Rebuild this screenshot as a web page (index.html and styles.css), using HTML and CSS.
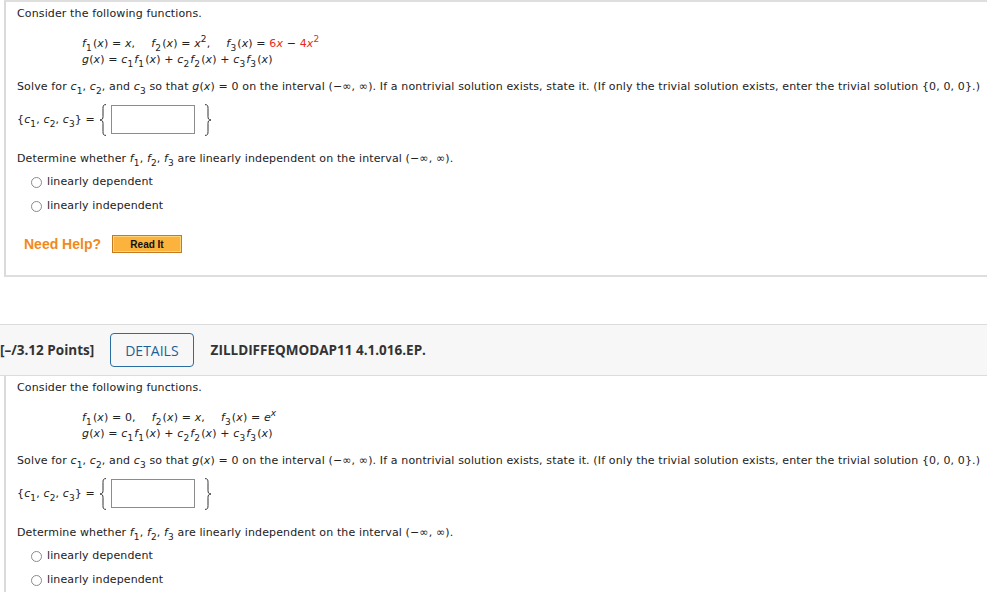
FILE: index.html
```html
<!DOCTYPE html>
<html lang="en">
<head>
<meta charset="utf-8">
<title>Linear independence</title>
<link rel="stylesheet" href="styles.css">
</head>
<body>
<section class="card first">
  <p class="intro">Consider the following functions.</p>
  <div class="math">
    <div class="mline"><i>f</i><sub>1</sub>(<i>x</i>) = <i>x</i>,<span class="sp"></span><i>f</i><sub>2</sub>(<i>x</i>) = <i>x</i><sup>2</sup>,<span class="sp"></span><i>f</i><sub>3</sub>(<i>x</i>) = <span class="red">6<i>x</i></span> − <span class="red">4<i>x</i><sup>2</sup></span></div>
    <div class="mline"><i>g</i>(<i>x</i>) = <i>c</i><sub>1</sub><i>f</i><sub>1</sub>(<i>x</i>) + <i>c</i><sub>2</sub><i>f</i><sub>2</sub>(<i>x</i>) + <i>c</i><sub>3</sub><i>f</i><sub>3</sub>(<i>x</i>)</div>
  </div>
  <p class="solve">Solve for <i>c</i><sub>1</sub>, <i>c</i><sub>2</sub>, and <i>c</i><sub>3</sub> so that <i>g</i>(<i>x</i>) = 0 on the interval (−∞, ∞). If a nontrivial solution exists, state it. (If only the trivial solution exists, enter the trivial solution {0, 0, 0}.)</p>
  <div class="setrow">
    <span class="setlabel">{<i>c</i><sub>1</sub>, <i>c</i><sub>2</sub>, <i>c</i><sub>3</sub>} =</span>
    <svg class="brace" viewBox="0 0 8 32" width="8" height="32"><path d="M7 0.6 C4.2 0.6 4 2 4 4.5 L4 12.5 C4 15 3.2 15.8 1 16 C3.2 16.2 4 17 4 19.5 L4 27.5 C4 30 4.2 31.4 7 31.4"/></svg>
    <span class="box"></span>
    <svg class="brace right" viewBox="0 0 8 32" width="8" height="32"><path d="M1 0.6 C3.8 0.6 4 2 4 4.5 L4 12.5 C4 15 4.8 15.8 7 16 C4.8 16.2 4 17 4 19.5 L4 27.5 C4 30 3.8 31.4 1 31.4"/></svg>
  </div>
  <p class="det">Determine whether <i>f</i><sub>1</sub>, <i>f</i><sub>2</sub>, <i>f</i><sub>3</sub> are linearly independent on the interval (−∞, ∞).</p>
  <ul class="choices">
    <li><span class="radio"></span>linearly dependent</li>
    <li><span class="radio"></span>linearly independent</li>
  </ul>
  <div class="help">
    <span class="needhelp">Need Help?</span>
    <span class="readit">Read It</span>
  </div>
</section>

<div class="qhead">
  <span class="points">[–/3.12 Points]</span>
  <span class="details">DETAILS</span>
  <span class="qid">ZILLDIFFEQMODAP11 4.1.016.EP.</span>
</div>

<section class="card second">
  <p class="intro">Consider the following functions.</p>
  <div class="math">
    <div class="mline"><i>f</i><sub>1</sub>(<i>x</i>) = 0,<span class="sp"></span><i>f</i><sub>2</sub>(<i>x</i>) = <i>x</i>,<span class="sp"></span><i>f</i><sub>3</sub>(<i>x</i>) = <i>e</i><sup><i>x</i></sup></div>
    <div class="mline"><i>g</i>(<i>x</i>) = <i>c</i><sub>1</sub><i>f</i><sub>1</sub>(<i>x</i>) + <i>c</i><sub>2</sub><i>f</i><sub>2</sub>(<i>x</i>) + <i>c</i><sub>3</sub><i>f</i><sub>3</sub>(<i>x</i>)</div>
  </div>
  <p class="solve">Solve for <i>c</i><sub>1</sub>, <i>c</i><sub>2</sub>, and <i>c</i><sub>3</sub> so that <i>g</i>(<i>x</i>) = 0 on the interval (−∞, ∞). If a nontrivial solution exists, state it. (If only the trivial solution exists, enter the trivial solution {0, 0, 0}.)</p>
  <div class="setrow">
    <span class="setlabel">{<i>c</i><sub>1</sub>, <i>c</i><sub>2</sub>, <i>c</i><sub>3</sub>} =</span>
    <svg class="brace" viewBox="0 0 8 32" width="8" height="32"><path d="M7 0.6 C4.2 0.6 4 2 4 4.5 L4 12.5 C4 15 3.2 15.8 1 16 C3.2 16.2 4 17 4 19.5 L4 27.5 C4 30 4.2 31.4 7 31.4"/></svg>
    <span class="box"></span>
    <svg class="brace right" viewBox="0 0 8 32" width="8" height="32"><path d="M1 0.6 C3.8 0.6 4 2 4 4.5 L4 12.5 C4 15 4.8 15.8 7 16 C4.8 16.2 4 17 4 19.5 L4 27.5 C4 30 3.8 31.4 1 31.4"/></svg>
  </div>
  <p class="det">Determine whether <i>f</i><sub>1</sub>, <i>f</i><sub>2</sub>, <i>f</i><sub>3</sub> are linearly independent on the interval (−∞, ∞).</p>
  <ul class="choices">
    <li><span class="radio"></span>linearly dependent</li>
    <li><span class="radio"></span>linearly independent</li>
  </ul>
</section>
</body>
</html>
```

FILE: styles.css
```css
html, body {
  margin: 0;
  padding: 0;
  background: #ffffff;
}

body {
  font-family: "DejaVu Sans", Verdana, sans-serif;
  font-size: 11px;
  letter-spacing: 0.13px;
  color: #222222;
  overflow: hidden;
}

p {
  margin: 0;
  line-height: 16px;
}

i {
  font-style: italic;
}

sub {
  font-size: 9px;
  line-height: 0;
  vertical-align: -4px;
}

sup {
  font-size: 9px;
  line-height: 0;
  vertical-align: 5px;
}

.card {
  margin-left: 4px;
  border-left: 2px solid #dadada;
  padding: 4px 0 0 11px;
}

.card.first {
  border-top: 2px solid #dedede;
  border-bottom: 2px solid #dedede;
  padding-bottom: 22px;
}

.card.second {
  padding-bottom: 40px;
}

.math {
  margin: 14px 0 0 65px;
}

.mline {
  line-height: 16px;
  white-space: nowrap;
}

.mline sub {
  padding-right: 1px;
}

.sp {
  display: inline-block;
  width: 16px;
}

.red {
  color: #e8262a;
}

.solve {
  margin-top: 11px;
  white-space: nowrap;
}

.setrow {
  margin-top: 10px;
  height: 29px;
  display: flex;
  align-items: center;
}

.setlabel {
  white-space: nowrap;
  line-height: 16px;
}

.brace {
  display: block;
  margin-left: 4px;
}

.brace path {
  fill: none;
  stroke: #333333;
  stroke-width: 1;
}

.brace.right {
  margin-left: 9px;
}

.box {
  display: block;
  width: 84px;
  height: 29px;
  box-sizing: border-box;
  border: 1px solid #8c8c8c;
  background: #ffffff;
  margin-left: 4px;
}

.det {
  margin-top: 17px;
  white-space: nowrap;
}

.choices {
  list-style: none;
  margin: 7px 0 0 0;
  padding: 0 0 0 14px;
  display: flex;
  flex-direction: column;
  gap: 8px;
}

.choices li {
  display: flex;
  align-items: center;
  line-height: 16px;
}

.radio {
  width: 11px;
  height: 11px;
  box-sizing: border-box;
  border: 1px solid #8a8a8a;
  border-radius: 50%;
  background: #ffffff;
  margin-right: 5px;
}

.help {
  margin-top: 21px;
  padding-left: 7px;
  display: flex;
  align-items: center;
  height: 18px;
  letter-spacing: 0;
}

.needhelp {
  font-family: "Liberation Sans", Arial, sans-serif;
  font-weight: bold;
  font-size: 14px;
  color: #f08a1a;
}

.readit {
  margin-left: 11px;
  width: 70px;
  height: 18px;
  box-sizing: border-box;
  border: 1px solid #c9791d;
  box-shadow: inset 0 0 0 1px #ffd479;
  background: #fbb33e;
  font-family: "Liberation Sans", Arial, sans-serif;
  font-weight: bold;
  font-size: 10px;
  color: #111111;
  display: flex;
  align-items: center;
  justify-content: center;
}

.qhead {
  margin-top: 47px;
  height: 50px;
  border-top: 1px solid #dcdcdc;
  border-bottom: 1px solid #dcdcdc;
  background: #f7f7f7;
  display: flex;
  align-items: center;
  font-family: "Open Sans", "Noto Sans", sans-serif;
  font-size: 14px;
  letter-spacing: 0;
  color: #333333;
}

.points {
  font-weight: bold;
  font-size: 13.5px;
  white-space: nowrap;
}

.details {
  margin-left: 16px;
  height: 34px;
  box-sizing: border-box;
  padding: 0 14px;
  border: 1px solid #2a6da3;
  border-radius: 4px;
  color: #1e5f96;
  display: flex;
  align-items: center;
}

.qid {
  margin-left: 17px;
  font-weight: bold;
  font-size: 13.5px;
  white-space: nowrap;
}
```
